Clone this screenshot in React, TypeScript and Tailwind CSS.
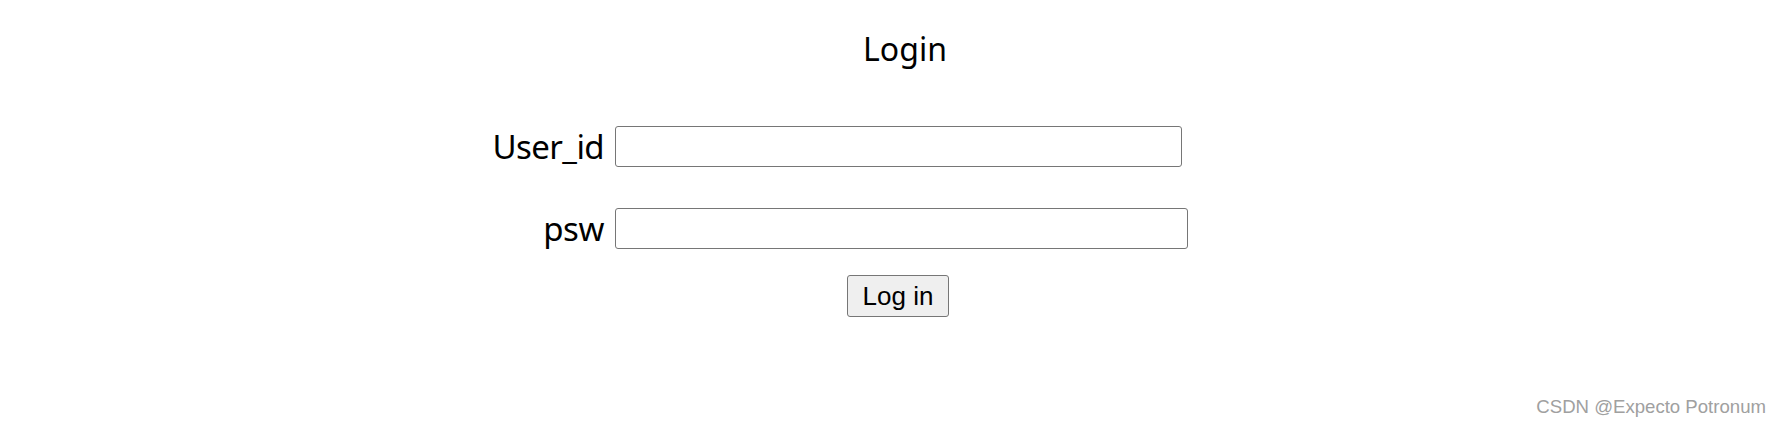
export default function App() {
  return (
    <div className="relative h-[427px] w-full bg-white font-['Noto_Sans',sans-serif] text-black">
      {/* Title */}
      <div className="flex justify-center pl-[28px] pt-[29px]">
        <h1 className="text-[32px] leading-[40px] font-normal">Login</h1>
      </div>

      {/* Form rows */}
      <div className="mt-[57px] grid grid-cols-[604px_auto] items-center gap-x-[11px] gap-y-[41px]">
        <label className="text-right text-[33px] leading-[41px] tracking-[-0.6px]">User_id</label>
        <input
          type="text"
          className="h-[41px] w-[567px] rounded-[3px] border border-[#767676] bg-white px-2 outline-none"
        />
        <label className="text-right text-[33px] leading-[41px] tracking-[-0.4px]">psw</label>
        <input
          type="password"
          className="h-[41px] w-[573px] rounded-[3px] border border-[#767676] bg-white px-2 outline-none"
        />
      </div>

      {/* Submit */}
      <div className="mt-[26px] flex justify-center pl-[14px]">
        <button className="h-[42px] w-[102px] rounded-[3px] border border-[#767676] bg-[#efefef] font-['Liberation_Sans',Arial,sans-serif] text-[26px] leading-[30px]">
          Log in
        </button>
      </div>

      {/* Watermark */}
      <div className="absolute bottom-[10px] right-[16px] font-['Liberation_Sans',Arial,sans-serif] text-[18.6px] leading-[20px] text-[#a0a0a0]">
        CSDN @Expecto Potronum
      </div>
    </div>
  );
}
